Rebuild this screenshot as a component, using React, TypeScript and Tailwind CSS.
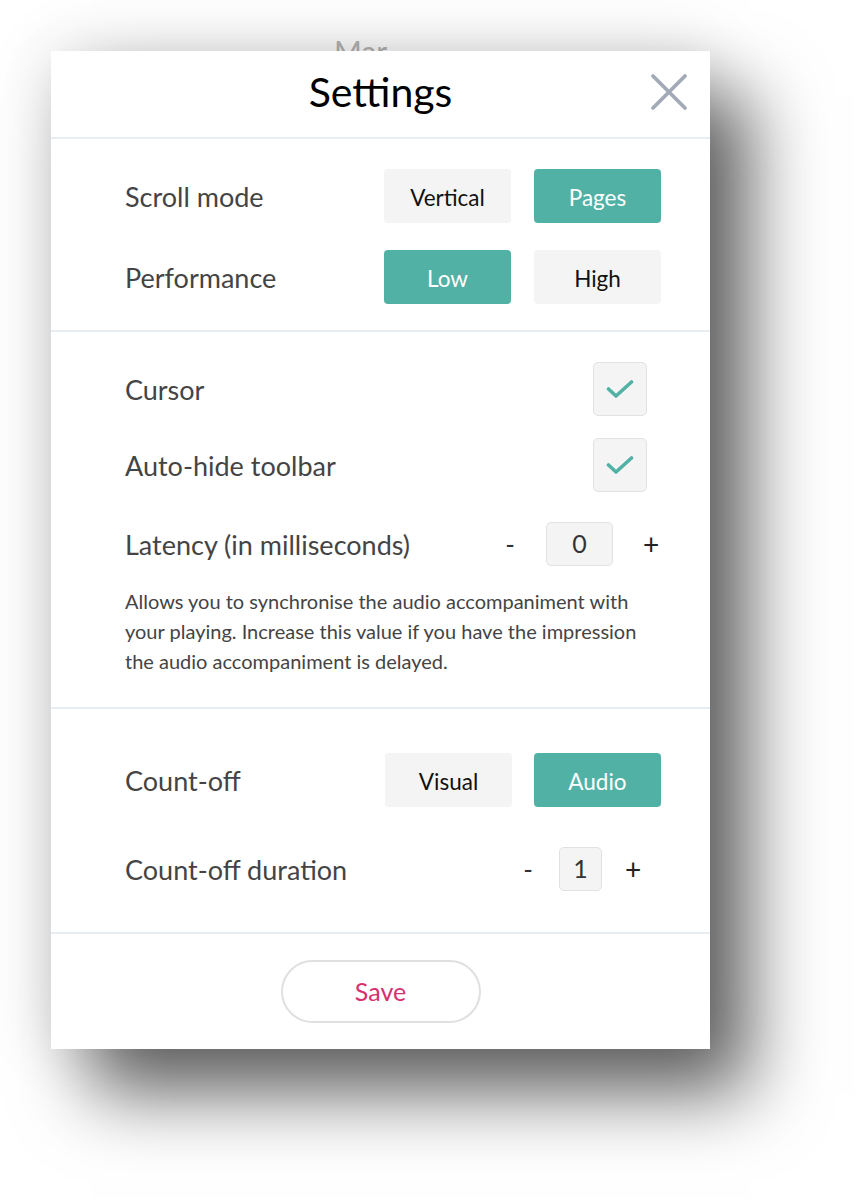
import React from "react";

const font = { fontFamily: '"Source Sans Pro", Lato, "Noto Sans", sans-serif' };

function Toggle({ active, children }: { active?: boolean; children: React.ReactNode }) {
  return (
    <div
      className={
        "w-[127px] h-[54px] rounded-[4px] flex items-center justify-center pt-[3px] text-[22.5px] " +
        (active ? "bg-[#52b1a5] text-white" : "bg-[#f4f4f4] text-[#111]")
      }
    >
      {children}
    </div>
  );
}

function Check() {
  return (
    <div className="w-[54px] h-[54px] rounded-[5px] border border-[#e2e2e2] bg-[#f4f4f4] flex items-center justify-center">
      <svg width="28" height="20" viewBox="0 0 28 20" fill="none">
        <path d="M2.5 10 L10 17 L25.5 3" stroke="#52b1a5" strokeWidth="3.6" strokeLinecap="round" strokeLinejoin="round" />
      </svg>
    </div>
  );
}

export default function App() {
  return (
    <div className="w-[860px] h-[1200px] bg-white relative overflow-hidden" style={font}>
      <div className="absolute left-[334px] top-[37px] text-[#b5b5b5] text-[30px] leading-[28px]">Mar</div>
      <div className="relative ml-[51px] mt-[51px] w-[659px] h-[998px] bg-white flex flex-col shadow-[40px_45px_70px_rgba(0,0,0,0.6),0_0_60px_rgba(0,0,0,0.14)]">
        <div className="h-[88px] border-b-2 border-[#e8edf1] relative flex items-center justify-center">
          <div className="text-[41px] text-black leading-none -mt-[6px]">Settings</div>
          <svg className="absolute right-[22px] top-[22px]" width="38" height="38" viewBox="0 0 38 38">
            <path d="M3 3 L35 35 M35 3 L3 35" stroke="#a3aab7" strokeWidth="3.8" strokeLinecap="round" />
          </svg>
        </div>

        <div className="h-[193px] border-b-2 border-[#e8edf1] pl-[74px] pr-[49px] pt-[30px] flex flex-col gap-[27px]">
          <div className="flex items-center h-[54px]">
            <div className="flex-1 text-[27px] text-[#444] pt-[2px]">Scroll mode</div>
            <div className="flex gap-[23px]">
              <Toggle>Vertical</Toggle>
              <Toggle active>Pages</Toggle>
            </div>
          </div>
          <div className="flex items-center h-[54px]">
            <div className="flex-1 text-[27px] text-[#444] pt-[2px]">Performance</div>
            <div className="flex gap-[23px]">
              <Toggle active>Low</Toggle>
              <Toggle>High</Toggle>
            </div>
          </div>
        </div>

        <div className="h-[377px] border-b-2 border-[#e8edf1] pl-[74px] pr-[49px] pt-[30px] flex flex-col">
          <div className="flex items-center h-[54px] pr-[14px]">
            <div className="flex-1 text-[27px] text-[#444] pt-[2px]">Cursor</div>
            <Check />
          </div>
          <div className="flex items-center h-[54px] pr-[14px] mt-[22px]">
            <div className="flex-1 text-[27px] text-[#444] pt-[2px]">Auto-hide toolbar</div>
            <Check />
          </div>
          <div className="flex items-center h-[44px] mt-[30px]">
            <div className="flex-1 text-[27px] text-[#444] pt-[2px]">Latency (in milliseconds)</div>
            <div className="flex items-center">
              <span className="text-[26px] text-[#333] w-[20px] text-center">-</span>
              <div className="ml-[26px] w-[67px] h-[44px] rounded-[5px] border border-[#e2e2e2] bg-[#f4f4f4] flex items-center justify-center text-[25px] text-[#333]">0</div>
              <span className="ml-[28px] text-[28px] text-[#222] w-[20px] text-center">+</span>
            </div>
          </div>
          <div className="mt-[20px] text-[20px] leading-[30px] text-[#444] w-[536px]">
            Allows you to synchronise the audio accompaniment with your playing. Increase this value if you have the impression the audio accompaniment is delayed.
          </div>
        </div>

        <div className="h-[225px] border-b-2 border-[#e8edf1] pl-[74px] pr-[49px] pt-[44px] flex flex-col">
          <div className="flex items-center h-[54px]">
            <div className="flex-1 text-[27px] text-[#444] pt-[2px]">Count-off</div>
            <div className="flex gap-[22px]">
              <Toggle>Visual</Toggle>
              <Toggle active>Audio</Toggle>
            </div>
          </div>
          <div className="flex items-center h-[44px] mt-[40px]">
            <div className="flex-1 text-[27px] text-[#444] pt-[2px]">Count-off duration</div>
            <div className="flex items-center mr-[18px]">
              <span className="text-[26px] text-[#333] w-[20px] text-center">-</span>
              <div className="ml-[21px] w-[43px] h-[44px] rounded-[5px] border border-[#e2e2e2] bg-[#f4f4f4] flex items-center justify-center text-[25px] text-[#333]">1</div>
              <span className="ml-[21px] text-[28px] text-[#222] w-[20px] text-center">+</span>
            </div>
          </div>
        </div>

        <div className="flex-1 flex items-start justify-center pt-[26px]">
          <div className="w-[200px] h-[63px] rounded-full border-2 border-[#e0e0e0] flex items-center justify-center text-[25px] text-[#d6306e]">
            Save
          </div>
        </div>
      </div>
    </div>
  );
}
